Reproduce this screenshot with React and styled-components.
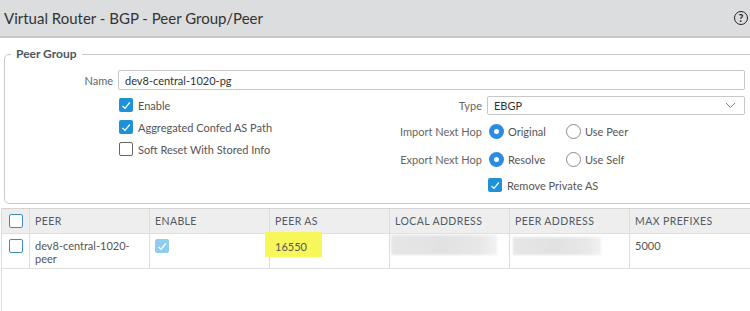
import React from 'react'
import styled, { createGlobalStyle } from 'styled-components';

const GlobalStyle = createGlobalStyle`
  html, body { margin: 0; padding: 0; background: #fff; }
  body { font-family: Lato, "Open Sans", sans-serif; color: #333; overflow: hidden; }
`;

const Window = styled.div`
  width: 750px;
  height: 311px;
  overflow: hidden;
  display: flex;
  flex-direction: column;
`;

const TitleBar = styled.div`
  height: 36px;
  flex: none;
  background: #dcdddf;
  border-bottom: 2px solid #c6c7c9;
  display: flex;
  align-items: center;
  justify-content: space-between;
  padding: 0 2px 0 4px;
  font-size: 15px;
  color: #333;
`;

const HelpIcon = styled.span`
  width: 12px;
  height: 12px;
  border: 1.5px solid #222;
  border-radius: 50%;
  font-size: 10.5px;
  font-weight: bold;
  line-height: 12px;
  text-align: center;
  color: #222;
`;

const Body = styled.div`
  padding: 9px 0 0 4px;
  display: flex;
  flex-direction: column;
`;

const Fieldset = styled.fieldset`
  margin: 0;
  width: 760px;
  height: 157px;
  box-sizing: border-box;
  border: 1px solid #c8c8c8;
  border-radius: 5px;
  padding: 9px 18px 0 0;
`;

const Legend = styled.legend`
  margin-left: 6px;
  padding: 0 5px;
  font-size: 12px;
  line-height: 14px;
  font-weight: bold;
  color: #4b5763;
`;

const NameRow = styled.div`
  display: flex;
  align-items: center;
  gap: 5px;
`;

const Label = styled.span`
  width: ${p => p.w}px;
  text-align: right;
  font-size: 11px;
  color: #666;
  flex: none;
`;

const TextInput = styled.div`
  flex: 1;
  height: ${p => p.h || 20}px;
  box-sizing: border-box;
  border: 1px solid #c8c8c8;
  border-radius: 2px;
  display: flex;
  align-items: center;
  justify-content: space-between;
  padding: 0 8px 0 6px;
  font-size: 11px;
  color: #333;
`;

const Columns = styled.div`
  display: grid;
  grid-template-columns: 368px 1fr;
  margin-top: 5px;
`;

const Stack = styled.div`
  display: flex;
  flex-direction: column;
  gap: ${p => p.gap || 0}px;
  padding-left: ${p => p.pl || 0}px;
  padding-top: ${p => p.pt || 0}px;
`;

const FormRow = styled.div`
  display: flex;
  align-items: center;
  gap: 5px;
  height: ${p => p.h || 20}px;
  margin-top: ${p => p.mt || 0}px;
`;

const CheckItem = styled.label`
  display: flex;
  align-items: center;
  gap: 5px;
  font-size: 11px;
  color: #555;
  height: 14px;
  margin-left: ${p => p.ml || 0}px;
`;

const Box = styled.span`
  width: 14px;
  height: 14px;
  border-radius: 2px;
  box-sizing: border-box;
  flex: none;
  display: flex;
  align-items: center;
  justify-content: center;
  background: ${p => p.checked ? (p.faded ? '#8fcdef' : '#1e91d9') : '#fff'};
  border: ${p => p.checked ? 'none' : p.blue ? '1.5px solid #3b8cc4' : '1px solid #666'};
`;

const RadioItem = styled.label`
  display: flex;
  align-items: center;
  gap: 4px;
  font-size: 11px;
  color: #555;
  width: ${p => p.w}px;
  flex: none;
`;

const RadioDot = styled.span`
  width: 15px;
  height: 15px;
  margin-left: 2px;
  border-radius: 50%;
  box-sizing: border-box;
  flex: none;
  background: ${p => p.checked ? '#2b8ce2' : '#fff'};
  border: ${p => p.checked ? 'none' : '1px solid #8a8a8a'};
  display: flex;
  align-items: center;
  justify-content: center;
  &::after {
    content: '';
    width: 5px;
    height: 5px;
    border-radius: 50%;
    background: #fff;
    display: ${p => p.checked ? 'block' : 'none'};
  }
`;

const Table = styled.div`
  margin: 4px 0 0 -3px;
  border-left: 1px solid #dcdcdc;
  height: 110px;
`;

const Row = styled.div`
  display: grid;
  grid-template-columns: 27px repeat(5, 120px) 1fr;
  height: ${p => p.h}px;
  box-sizing: border-box;
  background: ${p => p.head ? '#eeeeee' : '#fff'};
  border-top: ${p => p.head ? '1px solid #d4d4d4' : 'none'};
  border-bottom: 1px solid #dedede;
`;

const Cell = styled.div`
  box-sizing: border-box;
  border-left: ${p => p.first ? 'none' : '1px solid #dcdcdc'};
  padding: ${p => p.head ? '0 5px' : '5px 5px 0'};
  display: flex;
  align-items: ${p => p.head ? 'center' : 'flex-start'};
  justify-content: ${p => p.first ? 'center' : 'flex-start'};
  font-size: ${p => p.head ? '10.5px' : '11px'};
  letter-spacing: ${p => p.head ? '0.4px' : '0'};
  color: ${p => p.head ? '#505b64' : '#555'};
  line-height: 13px;
  position: relative;
`;

const Highlight = styled.span`
  position: absolute;
  left: -5px;
  top: -2px;
  width: 57px;
  height: 25px;
  background: #f8f75a;
`;

const HighlightText = styled.span`
  position: relative;
  margin-top: 1px;
`;

const Blur = styled.span`
  width: ${p => p.w}px;
  height: ${p => p.h}px;
  margin-top: ${p => p.mt}px;
  margin-left: ${p => p.ml}px;
  background: linear-gradient(90deg, #e6e6e6, #e2e2e2 50%, #e8e8e8 85%, #f2f2f2);
  filter: blur(1px);
`;

const Check = ({ checked, faded, blue }) => (
  <Box checked={checked} faded={faded} blue={blue}>
    {checked && (
      <svg width="10" height="9" viewBox="0 0 10 9">
        <path d="M1.5 5 L4 7.4 L8.8 1.5" fill="none" stroke="#fff" strokeWidth="1.2" />
      </svg>
    )}
  </Box>
);

const Chevron = () => (
  <svg width="11" height="7" viewBox="0 0 11 7">
    <path d="M1 1 L5.5 5.5 L10 1" fill="none" stroke="#888" strokeWidth="1" />
  </svg>
);

export default function App() {
  return (
    <Window>
      <GlobalStyle />
      <TitleBar>
        <span>Virtual Router - BGP - Peer Group/Peer</span>
        <HelpIcon>?</HelpIcon>
      </TitleBar>
      <Body>
        <Fieldset>
          <Legend>Peer Group</Legend>
          <NameRow>
            <Label w={108}>Name</Label>
            <TextInput>dev8-central-1020-pg</TextInput>
          </NameRow>
          <Columns>
            <Stack gap={8} pl={114} pt={3}>
              <CheckItem><Check checked />Enable</CheckItem>
              <CheckItem><Check checked />Aggregated Confed AS Path</CheckItem>
              <CheckItem><Check />Soft Reset With Stored Info</CheckItem>
            </Stack>
            <Stack>
              <FormRow>
                <Label w={109}>Type</Label>
                <TextInput h={19}>EBGP<Chevron /></TextInput>
              </FormRow>
              <FormRow mt={6}>
                <Label w={109}>Import Next Hop</Label>
                <RadioItem w={72}><RadioDot checked />Original</RadioItem>
                <RadioItem w={80}><RadioDot />Use Peer</RadioItem>
              </FormRow>
              <FormRow mt={8}>
                <Label w={109}>Export Next Hop</Label>
                <RadioItem w={72}><RadioDot checked />Resolve</RadioItem>
                <RadioItem w={80}><RadioDot />Use Self</RadioItem>
              </FormRow>
              <FormRow h={14} mt={9}>
                <Label w={109} />
                <CheckItem ml={1}><Check checked />Remove Private AS</CheckItem>
              </FormRow>
            </Stack>
          </Columns>
        </Fieldset>
        <Table>
          <Row head h={26}>
            <Cell head first><Check blue /></Cell>
            <Cell head>PEER</Cell>
            <Cell head>ENABLE</Cell>
            <Cell head>PEER AS</Cell>
            <Cell head>LOCAL ADDRESS</Cell>
            <Cell head>PEER ADDRESS</Cell>
            <Cell head>MAX PREFIXES</Cell>
          </Row>
          <Row h={35}>
            <Cell first><Check blue /></Cell>
            <Cell>dev8-central-1020-<br />peer</Cell>
            <Cell><Check checked faded /></Cell>
            <Cell><Highlight /><HighlightText>16550</HighlightText></Cell>
            <Cell><Blur w={106} h={20} mt={-4} ml={-4} /></Cell>
            <Cell><Blur w={88} h={18} mt={-2} ml={-2} /></Cell>
            <Cell>5000</Cell>
          </Row>
        </Table>
      </Body>
    </Window>
  );
}
